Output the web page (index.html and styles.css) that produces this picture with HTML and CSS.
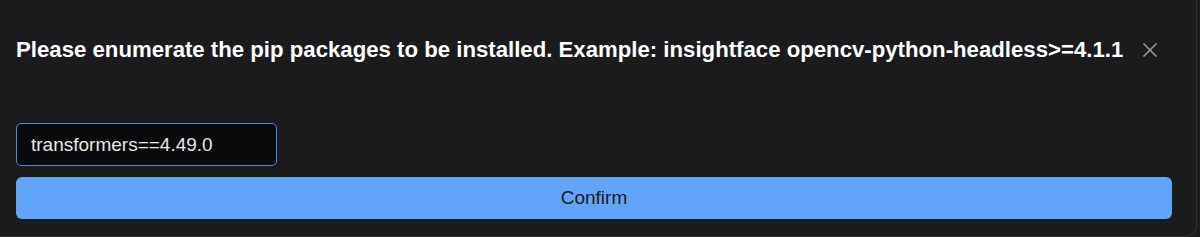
FILE: index.html
```html
<!DOCTYPE html>
<html lang="en">
<head>
  <meta charset="UTF-8">
  <title>Install pip packages</title>
  <link rel="stylesheet" href="styles.css">
</head>
<body>
  <div class="dialog">
    <div class="dialog-header">
      <span class="dialog-title">Please enumerate the pip packages to be installed. Example: insightface opencv-python-headless&gt;=4.1.1</span>
      <button class="close-btn" aria-label="Close">
        <svg width="16" height="16" viewBox="0 0 16 16">
          <path d="M1.5 1.5 L14.5 14.5 M14.5 1.5 L1.5 14.5" stroke="#9a9a9c" stroke-width="1.6" fill="none"/>
        </svg>
      </button>
    </div>

    <div class="dialog-body">
      <input class="pkg-input" type="text" value="transformers==4.49.0">
      <button class="confirm-btn">Confirm</button>
    </div>
  </div>
</body>
</html>
```

FILE: styles.css
```css
html, body {
  margin: 0;
  padding: 0;
  background: #1b1b1d;
  overflow: hidden;
}

body {
  font-family: "Liberation Sans", Arial, sans-serif;
  color: #fff;
}

.dialog {
  width: 1156px;
  height: 236px;
  padding: 0 24px 0 16px;
  border-right: 1px solid #303033;
  border-bottom: 1px solid #303033;
  border-bottom-right-radius: 12px;
  background: #1b1b1d;
}

.dialog-header {
  display: flex;
  align-items: center;
  gap: 19px;
  padding-top: 36px;
  height: 28px;
}

.dialog-title {
  font-size: 22.2px;
  font-weight: bold;
  line-height: 28px;
  white-space: nowrap;
}

.close-btn {
  display: flex;
  padding: 0;
  border: none;
  background: none;
  cursor: pointer;
}

.dialog-body {
  display: flex;
  flex-direction: column;
  gap: 11px;
  margin-top: 59px;
}

.pkg-input {
  box-sizing: border-box;
  width: 261px;
  height: 43px;
  padding: 0 14px;
  border: 1px solid #4a8ad8;
  border-radius: 5px;
  background: #0a0a0c;
  color: #e6e6e6;
  font-family: "Liberation Sans", Arial, sans-serif;
  font-size: 19px;
  outline: none;
}

.confirm-btn {
  height: 42px;
  width: 100%;
  border: none;
  border-radius: 6px;
  background: #60a5fa;
  color: #1c1c1e;
  font-family: "Liberation Sans", Arial, sans-serif;
  font-size: 19px;
  cursor: pointer;
}
```
